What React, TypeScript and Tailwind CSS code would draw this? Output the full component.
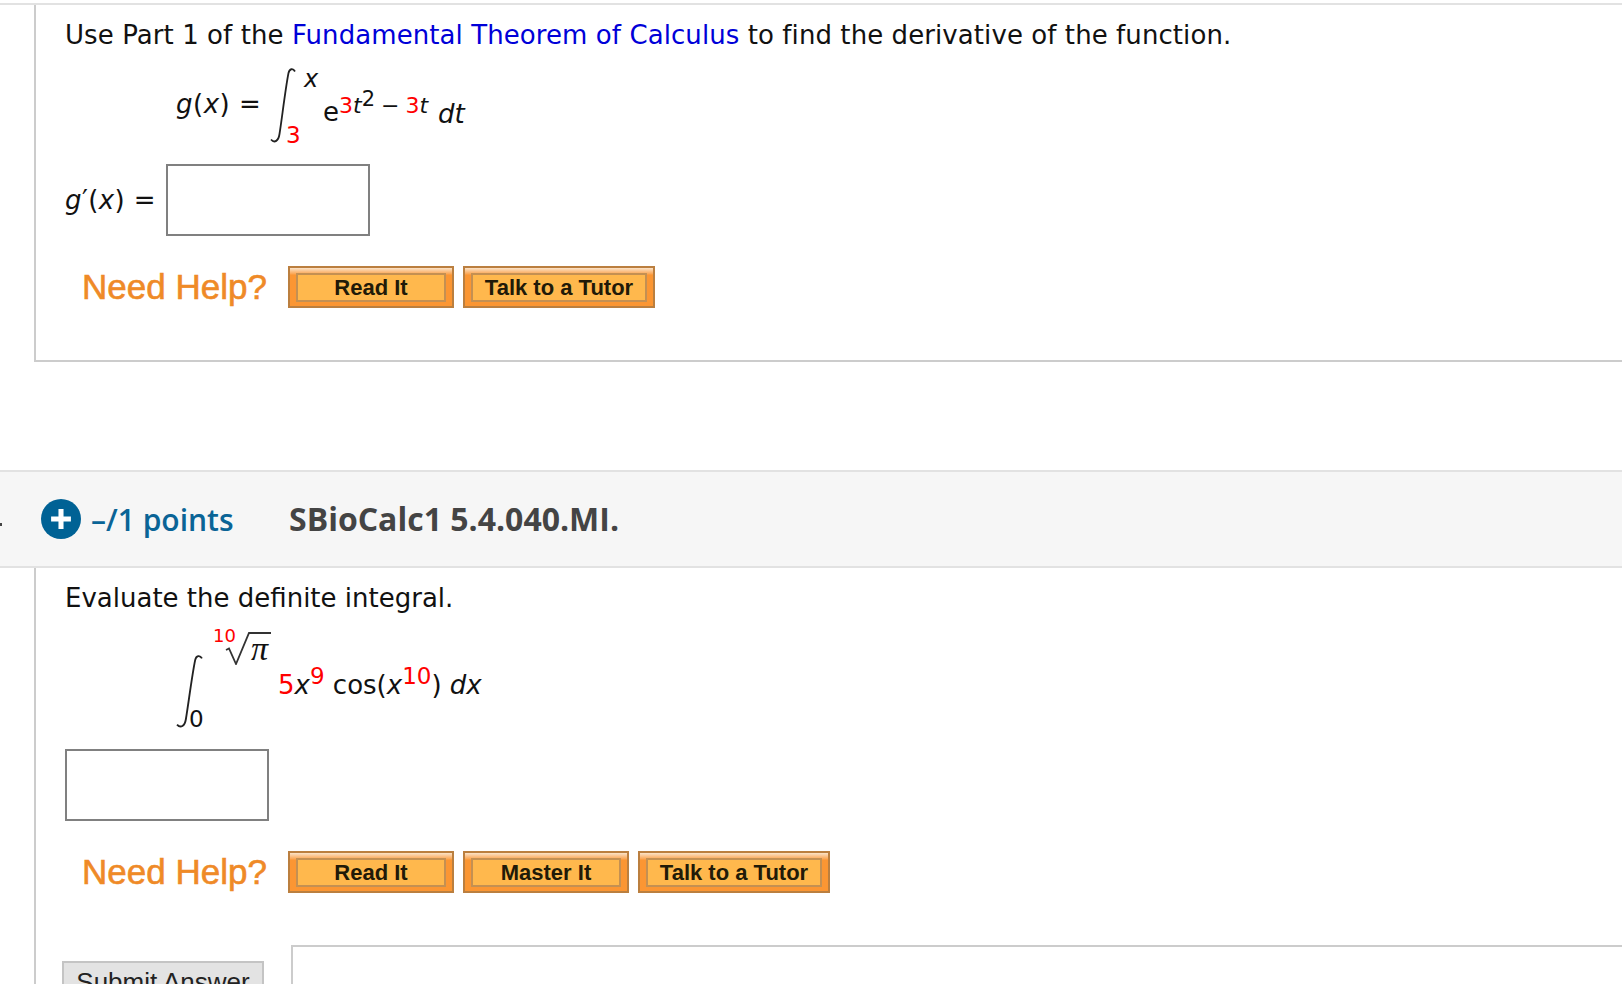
const sans = "font-['DejaVu_Sans',sans-serif]";

function IntegralSign({ className }: { className: string }) {
  return (
    <svg className={className} viewBox="0 0 26 75" fill="none" preserveAspectRatio="none">
      <path
        d="M25 3.5 C23 0 19.5 0.5 18.5 5 C15.5 20 12 50 9.5 66 C8.5 73 4.5 75.5 1 71.5"
        stroke="#222"
        strokeWidth="1.8"
      />
    </svg>
  );
}

function HelpButton({ label, width }: { label: string; width: string }) {
  return (
    <button className={`${width} h-[42px] border-2 border-[#bb7f3f] bg-[linear-gradient(#fbe3c8,#fba552_6px,#fb9633_7px)] px-[6px] pb-[4px] pt-[5px]`}>
      <span className="flex h-full items-center justify-center border-2 border-[#c49052] bg-[#ffb84d] font-['Liberation_Sans',sans-serif] text-[22px] font-bold text-[#211a08]">
        {label}
      </span>
    </button>
  );
}

function NeedHelp({ children }: { children: React.ReactNode }) {
  return (
    <div className="flex items-center">
      <span className="ml-[17px] w-[206px] font-['Liberation_Sans',sans-serif] text-[35px] leading-[42px] text-[#ef8a27] [-webkit-text-stroke:0.6px_#ef8a27]">
        Need Help?
      </span>
      <div className="flex gap-[9px]">{children}</div>
    </div>
  );
}

function AnswerBox() {
  return <input className="h-[72px] w-[204px] border-2 border-[#808080] bg-white" />;
}

export default function App() {
  return (
    <div className={`h-[984px] overflow-hidden bg-white pt-[3px] text-[26px] text-[#111] ${sans}`}>
      <div className="h-[2px] bg-[#e2e2e2]" />

      {/* Question 1 */}
      <section className="ml-[34px] h-[357px] border-b-2 border-l-2 border-[#cccccc] pl-[29px] pt-[14px]">
        <p className="leading-[32px] tracking-[0.08px]">
          Use Part 1 of the <span className="text-[#0000d8]">Fundamental Theorem of Calculus</span> to find the
          derivative of the function.
        </p>

        <div className="ml-[111px] mt-[11px] flex h-[86px] items-start">
          <span className="mt-[26px] w-[94px] leading-[32px] tracking-[0.5px]">
            <i>g</i>(<i>x</i>) =
          </span>
          <IntegralSign className="mt-[6px] h-[75px] w-[26px]" />
          <div className="-ml-[10px] flex h-[86px] w-[37px] flex-col justify-between">
            <i className="ml-[18px] mt-[4px] text-[24px] leading-[26px]">x</i>
            <span className="text-[23px] leading-[26px] text-[#ff0000]">3</span>
          </div>
          <span className="mt-[34px] leading-[32px]">e</span>
          <span className="mt-[30px] flex gap-[6px] text-[22px] leading-[28px]">
            <span>
              <span className="text-[#ff0000]">3</span>
              <i>t</i>
              <sup className="-top-[7px] text-[21px] leading-none">2</sup>
            </span>
            <span>−</span>
            <span>
              <span className="text-[#ff0000]">3</span>
              <i>t</i>
            </span>
          </span>
          <i className="ml-[10px] mt-[36px] leading-[32px]">dt</i>
        </div>

        <div className="mt-[16px] flex items-center">
          <span className="w-[101px] tracking-[0.4px]">
            <i>g</i>′(<i>x</i>) =
          </span>
          <AnswerBox />
        </div>

        <div className="mt-[30px]">
          <NeedHelp>
            <HelpButton label="Read It" width="w-[166px]" />
            <HelpButton label="Talk to a Tutor" width="w-[192px]" />
          </NeedHelp>
        </div>
      </section>

      <div className="h-[108px]" />

      {/* Question 2 header */}
      <header className="flex h-[98px] items-center border-y-2 border-[#e2e2e2] bg-[#f6f6f6] font-['Open_Sans',sans-serif]">
        <span className="mr-[39px] mt-[10px] h-[3px] w-[2px] bg-[#444444]" />
        <span className="flex h-[40px] w-[40px] items-center justify-center rounded-full bg-[#006295]">
          <svg viewBox="0 0 20 20" className="h-[22px] w-[22px]" fill="none" stroke="#fff" strokeWidth="4.6">
            <path d="M10 1v18M1 10h18" />
          </svg>
        </span>
        <span className="ml-[10px] w-[198px] text-[30px] font-semibold text-[#0a6496]">–/1 points</span>
        <span className="text-[32px] font-bold text-[#444444]">SBioCalc1 5.4.040.MI.</span>
      </header>

      {/* Question 2 */}
      <section className="ml-[34px] h-[420px] border-l-2 border-[#cccccc] pl-[29px] pt-[14px]">
        <p className="leading-[32px]">Evaluate the definite integral.</p>

        <div className="ml-[111px] mt-[6px] flex h-[112px] items-start">
          <IntegralSign className="mt-[35px] h-[73px] w-[27px]" />
          <div className="-ml-[14px] flex h-[112px] w-[89px] flex-col justify-between">
            <span className="ml-[3px] flex items-start">
              <span className="ml-[21px] mt-[6px] text-[18px] leading-[20px] text-[#ff0000]">10</span>
              <svg viewBox="0 0 46 34" className="-ml-[11px] mt-[11px] h-[34px] w-[46px] shrink-0" fill="none" stroke="#333">
                <path d="M1 19l3-1.5 7 15.5L24 2H46" strokeWidth="1.8" />
              </svg>
              <i className="-ml-[20px] mt-[13px] font-['Liberation_Serif',serif] text-[34px] leading-[32px]">π</i>
            </span>
            <span className="text-[23px] leading-[26px]">0</span>
          </div>
          <span className="mt-[45px] leading-[40px]">
            <span className="text-[#ff0000]">5</span>
            <i>x</i>
            <sup className="-top-[10px] text-[23px] leading-none text-[#ff0000]">9</sup> cos(<i>x</i>
            <sup className="-top-[10px] text-[23px] leading-none text-[#ff0000]">10</sup>) <i>dx</i>
          </span>
        </div>

        <div className="mt-[17px]">
          <AnswerBox />
        </div>

        <div className="mt-[30px]">
          <NeedHelp>
            <HelpButton label="Read It" width="w-[166px]" />
            <HelpButton label="Master It" width="w-[166px]" />
            <HelpButton label="Talk to a Tutor" width="w-[192px]" />
          </NeedHelp>
        </div>

        <div className="mt-[52px] flex items-start">
          <button className="-ml-[3px] mt-[16px] h-[38px] w-[202px] shrink-0 border-2 border-[#c4c4c4] bg-[#e3e3e3] font-['Liberation_Sans',sans-serif] text-[26px] text-[#222]">
            Submit Answer
          </button>
          <div className="ml-[27px] h-[60px] flex-1 border-l-2 border-t-2 border-[#cccccc]" />
        </div>
      </section>
    </div>
  );
}
